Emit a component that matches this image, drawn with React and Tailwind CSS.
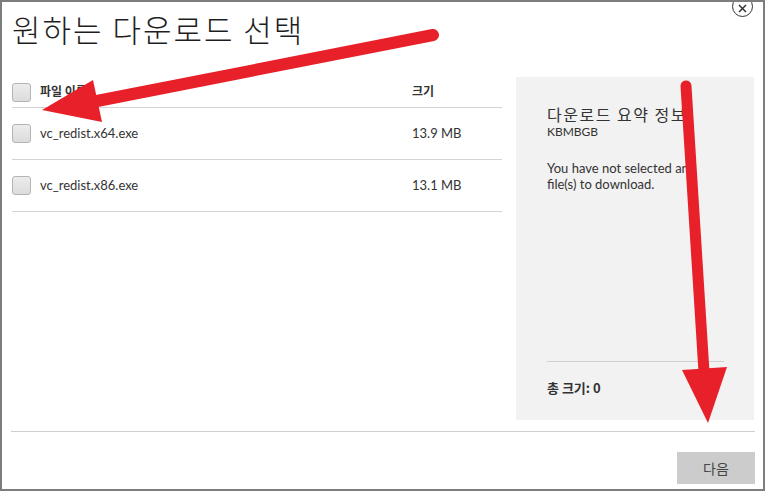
import React from "react";

function Checkbox() {
  return (
    <div className="w-[19px] h-[19px] rounded-[3px] border border-[#b4b4b4] bg-gradient-to-b from-[#ececec] to-[#dcdcdc] shrink-0" />
  );
}

function Row({ name, size }) {
  return (
    <div className="flex items-center h-[52px] border-b border-[#d4d4d4]">
      <Checkbox />
      <span className="ml-[9px] w-[372px] text-[13px] text-[#333]">{name}</span>
      <span className="text-[13px] text-[#333]">{size}</span>
    </div>
  );
}

export default function App() {
  return (
    <div
      className="relative w-[765px] h-[491px] bg-white border-2 border-[#7d7d7d] overflow-hidden font-['Lato','Noto_Sans_CJK_KR',sans-serif]"
    >
      <div className="absolute top-[-6px] right-[10px] w-[21px] h-[21px] rounded-full border-[1.5px] border-[#333] flex items-center justify-center">
        <svg width="9" height="9" viewBox="0 0 9 9" className="mt-[3px]">
          <path d="M1 1 L8 8 M8 1 L1 8" stroke="#333" strokeWidth="1.5" />
        </svg>
      </div>

      <div className="pl-[10px] pr-[8px]">
        <h1 className="pt-[6px] h-[75px] text-[31px] leading-[42px] tracking-[2px] font-light text-[#1e1e1e] font-['Noto_Sans_CJK_KR',sans-serif]">
          원하는 다운로드 선택
        </h1>

        <div className="flex gap-[14px]">
          <div className="w-[490px]">
            <div className="flex items-center h-[31px] border-b border-[#d4d4d4]">
              <Checkbox />
              <span className="ml-[9px] w-[372px] text-[12px] font-bold text-[#333] leading-[16px] mb-[2px] font-['Noto_Sans_CJK_KR',sans-serif]">
                파일 이름
              </span>
              <span className="text-[12px] font-bold text-[#333] leading-[16px] mb-[2px] font-['Noto_Sans_CJK_KR',sans-serif]">크기</span>
            </div>
            <Row name="vc_redist.x64.exe" size="13.9 MB" />
            <Row name="vc_redist.x86.exe" size="13.1 MB" />
          </div>

          <div className="w-[238px] h-[343px] bg-[#f2f2f2] pl-[31px] pr-[30px] flex flex-col">
            <div className="mt-[28px] text-[16px] leading-[18px] tracking-[1.5px] text-[#333] font-['Noto_Sans_CJK_KR',sans-serif]">
              다운로드 요약 정보
            </div>
            <div className="mt-[1px] text-[12px] leading-[15px] text-[#333]">KBMBGB</div>
            <div className="mt-[21px] text-[13px] leading-[16px] text-[#333]">
              You have not selected any file(s) to download.
            </div>
            <div className="mt-auto border-t border-[#cfcfcf] h-[59px] pt-[13px]">
              <span className="text-[13px] font-bold text-[#333] font-['Noto_Sans_CJK_KR',sans-serif]">
                총 크기: 0
              </span>
            </div>
          </div>
        </div>

        <div className="mt-[11px] ml-[-1px] border-t border-[#cfcfcf] flex justify-end pt-[20px]">
          <button className="w-[78px] h-[32px] bg-[#cccccc] text-[14px] text-[#444] font-['Noto_Sans_CJK_KR',sans-serif]">
            다음
          </button>
        </div>
      </div>

      <svg
        className="absolute left-[-2px] top-[-2px] pointer-events-none"
        width="765"
        height="491"
        viewBox="0 0 765 491"
      >
        <line x1="433" y1="35" x2="97" y2="101" stroke="#e8202a" strokeWidth="12" strokeLinecap="round" />
        <polygon points="42,110 93,80 102,122" fill="#e8202a" />
        <line x1="686" y1="86" x2="704" y2="372" stroke="#e8202a" strokeWidth="11" strokeLinecap="round" />
        <polygon points="682,370 727,367 708,423" fill="#e8202a" />
      </svg>
    </div>
  );
}
